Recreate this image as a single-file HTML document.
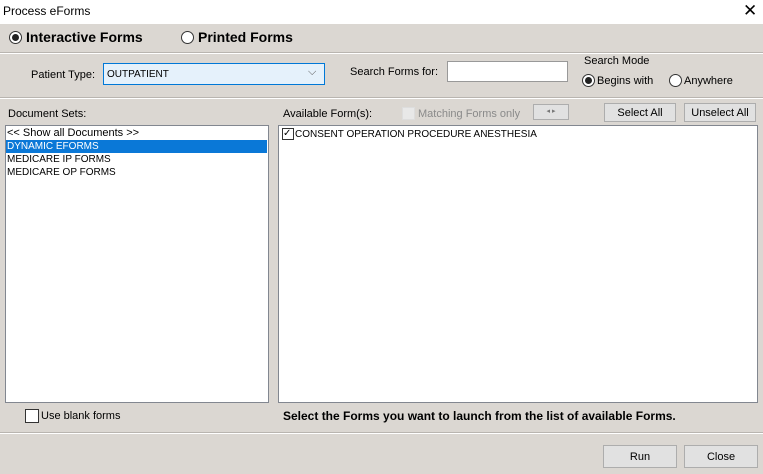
<!DOCTYPE html>
<html><head><style>
body{margin:0;width:763px;height:474px;background:#dbd7d2;font-family:"Liberation Sans",sans-serif;font-size:11px;color:#000;position:relative;overflow:hidden}
.a{position:absolute;white-space:nowrap}
.u{font-size:10px}
.sep{position:absolute;left:0;width:763px;height:1px;background:#b9b5b0;border-bottom:1px solid #fff}
.rad{position:absolute;width:11px;height:11px;border:1px solid #333;border-radius:50%;background:#fff}
.rad.on::after{content:"";position:absolute;left:2px;top:2px;width:7px;height:7px;border-radius:50%;background:#222}
.btn{position:absolute;background:#e1e1e1;border:1px solid #adadad;text-align:center;box-sizing:border-box}
.box{position:absolute;background:#fff;border:1px solid #828790;box-sizing:border-box}
</style></head><body>
<div class="a" style="left:0;top:0;width:763px;height:24px;background:#fff"></div>
<div class="a" style="left:3px;top:4px;font-size:12px">Process eForms</div>
<div class="a" style="left:743px;top:1px;font-size:17px">✕</div>
<div class="rad on" style="left:9px;top:31px"></div>
<div class="a" style="left:26px;top:29px;font-weight:bold;font-size:14px">Interactive Forms</div>
<div class="rad" style="left:181px;top:31px"></div>
<div class="a" style="left:198px;top:29px;font-weight:bold;font-size:14px">Printed Forms</div>
<div class="sep" style="top:52px"></div>
<div class="a" style="left:31px;top:69px">Patient Type:</div>
<div class="box" style="left:103px;top:63px;width:222px;height:22px;background:#e5f1fb;border-color:#0078d7"></div>
<div class="a u" style="left:107px;top:69px">OUTPATIENT</div>
<div class="a" style="left:308px;top:66px;font-size:11px;color:#555">⌵</div>
<div class="a" style="left:350px;top:66px">Search Forms for:</div>
<div class="box" style="left:447px;top:61px;width:121px;height:21px;border-color:#999"></div>
<div class="a" style="left:584px;top:55px">Search Mode</div>
<div class="rad on" style="left:582px;top:74px"></div>
<div class="a" style="left:597px;top:75px">Begins with</div>
<div class="rad" style="left:669px;top:74px"></div>
<div class="a" style="left:684px;top:75px">Anywhere</div>
<div class="sep" style="top:97px"></div>
<div class="a" style="left:8px;top:108px">Document Sets:</div>
<div class="a" style="left:283px;top:108px">Available Form(s):</div>
<div class="a" style="left:402px;top:107px;width:11px;height:11px;background:#e8e8e8;border:1px solid #ddd"></div>
<div class="a" style="left:418px;top:108px;color:#8a8a8a">Matching Forms only</div>
<div class="btn" style="left:533px;top:104px;width:36px;height:16px;font-size:7px;line-height:14px;color:#777">◂ ▸</div>
<div class="btn" style="left:604px;top:103px;width:72px;height:19px;line-height:18px">Select All</div>
<div class="btn" style="left:684px;top:103px;width:72px;height:19px;line-height:18px">Unselect All</div>
<div class="box" style="left:5px;top:125px;width:264px;height:278px"></div>
<div class="a" style="left:7px;top:127px">&lt;&lt; Show all Documents &gt;&gt;</div>
<div class="a" style="left:6px;top:140px;width:261px;height:13px;background:#0a78d7"></div>
<div class="a u" style="left:7px;top:141px;color:#fff">DYNAMIC EFORMS</div>
<div class="a u" style="left:7px;top:154px">MEDICARE IP FORMS</div>
<div class="a u" style="left:7px;top:167px">MEDICARE OP FORMS</div>
<div class="box" style="left:278px;top:125px;width:480px;height:278px"></div>
<div class="a" style="left:282px;top:128px;width:10px;height:10px;border:1px solid #333;font-size:10px;line-height:10px">✓</div>
<div class="a u" style="left:295px;top:129px">CONSENT OPERATION PROCEDURE ANESTHESIA</div>
<div class="a" style="left:25px;top:409px;width:12px;height:12px;border:1px solid #333;background:#fff"></div>
<div class="a" style="left:41px;top:410px">Use blank forms</div>
<div class="a" style="left:283px;top:409px;font-weight:bold;font-size:12px">Select the Forms you want to launch from the list of available Forms.</div>
<div class="sep" style="top:432px"></div>
<div class="btn" style="left:603px;top:445px;width:74px;height:23px;line-height:22px">Run</div>
<div class="btn" style="left:684px;top:445px;width:74px;height:23px;line-height:22px">Close</div>
</body></html>
